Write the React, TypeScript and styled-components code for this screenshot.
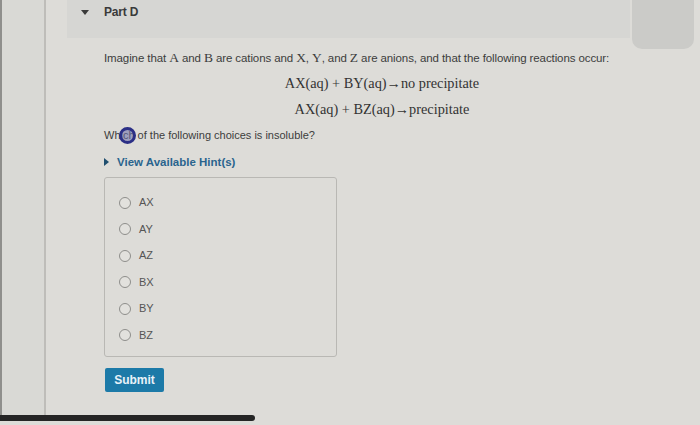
import React from "react";
import styled, { createGlobalStyle } from "styled-components";

const Global = createGlobalStyle`
  html, body { margin: 0; padding: 0; background: #dcdbd7; }
  body { font-family: "Liberation Sans", Arial, sans-serif; color: #3a3a3a; }
`;

const Page = styled.div`
  width: 700px;
  height: 425px;
  overflow: hidden;
  display: flex;
  flex-direction: column;
  background: #dddcd8;
`;

const Screen = styled.div`
  display: flex;
  height: 415px;
  flex: none;
`;

const LeftStrip = styled.div`
  width: 46px;
  flex: none;
  background: #d9d9d5;
  border-left: 2px solid #8f8f8c;
  border-right: 2px solid #bebdb9;
  box-sizing: border-box;
`;

const Main = styled.div`
  flex: 1;
  display: flex;
  flex-direction: column;
`;

const TopRow = styled.div`
  display: flex;
  align-items: flex-start;
  padding-left: 21px;
`;

const HeaderBand = styled.div`
  width: 563px;
  height: 38px;
  background: #d6d6d3;
  display: flex;
  align-items: flex-start;
  padding: 5px 0 0 14px;
  box-sizing: border-box;
`;

const Caret = styled.span<{ $dir: "down" | "right"; $color: string }>`
  width: 0;
  height: 0;
  flex: none;
  ${(p) =>
    p.$dir === "down"
      ? `border-left: 4px solid transparent; border-right: 4px solid transparent; border-top: 5px solid ${p.$color};`
      : `border-top: 4px solid transparent; border-bottom: 4px solid transparent; border-left: 5px solid ${p.$color};`}
`;

const PartTitle = styled.span`
  font-size: 12px;
  font-weight: 700;
  color: #3a3a3a;
  line-height: 14px;
  letter-spacing: -0.2px;
  display: flex;
  align-items: center;
  gap: 15px;
`;

const SideBlock = styled.div`
  margin-left: 2px;
  width: 62px;
  height: 49px;
  background: #cbcbc8;
  border-radius: 0 0 10px 10px;
`;

const Content = styled.div`
  padding-left: 58px;
  display: flex;
  flex-direction: column;
  align-items: flex-start;
`;

const Para = styled.p`
  margin: 2px 0 0 0;
  font-size: 11.5px;
  line-height: 14px;
  color: #3c3c3c;
  letter-spacing: -0.1px;
`;

const M = styled.span`
  font-family: "Liberation Serif", "Times New Roman", serif;
  font-size: 13.5px;
`;

const Equations = styled.div`
  width: 556px;
  display: flex;
  flex-direction: column;
  align-items: center;
  gap: 6px;
  margin-top: 8px;
`;

const Equation = styled.div`
  font-family: "Liberation Serif", "Times New Roman", serif;
  font-size: 14.3px;
  line-height: 20px;
  color: #333;
`;

const Question = styled.p`
  position: relative;
  margin: 9px 0 0 0;
  font-size: 11px;
  line-height: 14px;
  color: #3c3c3c;
`;

const Cursor = styled.span`
  position: absolute;
  left: 15px;
  top: -1px;
  width: 11px;
  height: 11px;
  border-radius: 50%;
  border: 3px solid #2b2f86;
  background: rgba(105, 110, 170, 0.55);
`;

const Hint = styled.div`
  margin-top: 13px;
  display: flex;
  align-items: center;
  gap: 8px;
  font-size: 11.5px;
  font-weight: 700;
  color: #2a648e;
  line-height: 14px;
`;

const Choices = styled.div`
  margin-top: 8px;
  width: 233px;
  height: 180px;
  box-sizing: border-box;
  border: 1px solid #b9b8b4;
  border-radius: 3px;
  padding: 18px 0 0 14px;
  display: flex;
  flex-direction: column;
  gap: 13.6px;
`;

const Option = styled.label`
  display: flex;
  align-items: center;
  gap: 8px;
  font-size: 11px;
  line-height: 13px;
  color: #555;
`;

const Radio = styled.span`
  width: 12px;
  height: 12px;
  box-sizing: border-box;
  border-radius: 50%;
  border: 1px solid #8e8e8b;
  background: #e2e1dd;
`;

const Submit = styled.button`
  margin-top: 11px;
  margin-left: 1px;
  width: 59px;
  height: 24px;
  border: none;
  border-radius: 2px;
  background: #1c7aa8;
  color: #e8f2f8;
  font-family: "Liberation Sans", Arial, sans-serif;
  font-size: 12px;
  font-weight: 700;
  padding: 0;
`;

const BottomBar = styled.div`
  width: 255px;
  height: 6px;
  background: #252525;
  border-radius: 0 3px 3px 0;
`;

const options = ["AX", "AY", "AZ", "BX", "BY", "BZ"];

export default function App() {
  return (
    <>
      <Global />
      <Page>
        <Screen>
          <LeftStrip />
          <Main>
            <TopRow>
              <HeaderBand>
                <PartTitle>
                  <Caret $dir="down" $color="#3a3a3a" />
                  Part D
                </PartTitle>
              </HeaderBand>
              <SideBlock />
            </TopRow>
            <Content>
              <Para>
                Imagine that <M>A</M> and <M>B</M> are cations and <M>X</M>, <M>Y</M>, and <M>Z</M> are anions, and that the following reactions occur:
              </Para>
              <Equations>
                <Equation>AX(aq) + BY(aq)→no precipitate</Equation>
                <Equation>AX(aq) + BZ(aq)→precipitate</Equation>
              </Equations>
              <Question>
                Which of the following choices is insoluble?
                <Cursor />
              </Question>
              <Hint>
                <Caret $dir="right" $color="#1f4e6e" />
                View Available Hint(s)
              </Hint>
              <Choices>
                {options.map((o) => (
                  <Option key={o}>
                    <Radio />
                    {o}
                  </Option>
                ))}
              </Choices>
              <Submit>Submit</Submit>
            </Content>
          </Main>
        </Screen>
        <BottomBar />
      </Page>
    </>
  );
}
